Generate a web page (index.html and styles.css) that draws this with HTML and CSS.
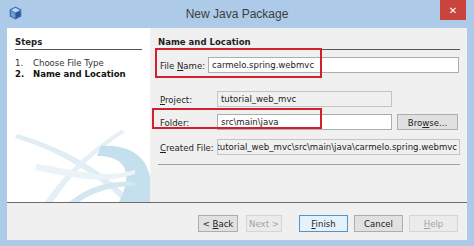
FILE: index.html
```html
<!DOCTYPE html>
<html lang="en">
<head>
  <meta charset="UTF-8">
  <title>New Java Package</title>
  <link rel="stylesheet" href="styles.css">
</head>
<body>
<div class="window">

  <!-- Title bar -->
  <div class="titlebar">
    <svg class="app-icon" width="13" height="14" viewBox="0 0 13 14">
      <path d="M6.5 0.5 L12.3 3.6 L12.3 10.4 L6.5 13.5 L0.7 10.4 L0.7 3.6 Z" fill="#3b6fb0"/>
      <path d="M6.5 1.8 L11 4.2 L6.5 6.6 L2 4.2 Z" fill="#bcd6f2"/>
      <path d="M2 5.2 L6 7.3 L6 12 L2 9.9 Z" fill="#6f9fd6"/>
      <path d="M7 7.3 L11 5.2 L11 9.9 L7 12 Z" fill="#2a5796"/>
    </svg>
    <div class="title">New Java Package</div>
    <div class="close">&#x2715;</div>
  </div>

  <div class="client">
    <div class="main">

      <!-- Steps -->
      <div class="steps">
        <div class="section-head">Steps</div>
        <ol class="step-list">
          <li><span class="num">1.</span>Choose File Type</li>
          <li class="current"><span class="num">2.</span>Name and Location</li>
        </ol>
        <svg class="swoosh" width="143" height="72" viewBox="0 0 143 72">
          <path d="M10 4 C50 16 90 34 126 72 L118 72 C84 40 48 20 8 8 Z" fill="#e1edf5"/>
          <path d="M118 2 C90 20 64 44 46 72 L38 72 C58 42 86 18 114 0 Z" fill="#e4eff6"/>
          <path d="M94 16 C124 14 150 28 143 72 L112 72 C130 36 112 26 90 26 Z" fill="#c4e0ed"/>
          <path d="M30 34 C60 38 96 50 128 40 L128 44 C96 56 60 46 28 40 Z" fill="#eaf3f8"/>
          <path d="M62 72 C82 56 102 50 128 52 L128 56 C106 56 86 62 72 72 Z" fill="#d4e7f1"/>
        </svg>
      </div>

      <!-- Name and Location -->
      <div class="panel">
        <div class="section-head">Name and Location</div>

        <div class="field name-row">
          <label class="lbl narrow">File <u>N</u>ame:</label>
          <div class="input wide">carmelo.spring.webmvc</div>
        </div>

        <div class="field project-row">
          <label class="lbl"><u>P</u>roject:</label>
          <div class="input ro short">tutorial_web_mvc</div>
        </div>

        <div class="field folder-row">
          <label class="lbl">Fo<u>l</u>der:</label>
          <div class="input short">src\main\java</div>
          <button class="btn browse">Bro<u>w</u>se...</button>
        </div>

        <div class="field created-row">
          <label class="lbl"><u>C</u>reated File:</label>
          <div class="input ro created"><span>tutorial_web_mvc\src\main\java\carmelo.spring.webmvc</span></div>
        </div>

        <div class="rule"></div>

        <div class="mark mark-name"></div>
        <div class="mark mark-folder"></div>
      </div>
    </div>

    <!-- Buttons -->
    <div class="footer">
      <button class="btn back">&lt; <u>B</u>ack</button>
      <button class="btn next disabled">Next &gt;</button>
      <button class="btn default"><u>F</u>inish</button>
      <button class="btn">Cancel</button>
      <button class="btn disabled"><u>H</u>elp</button>
    </div>
  </div>

</div>
</body>
</html>
```

FILE: styles.css
```css
/* Window frame */
body {
  margin: 0;
  font-family: 'DejaVu Sans Condensed', 'Liberation Sans', sans-serif;
  font-size: 9.5px;
  color: #1e1e1e;
}

.window {
  width: 474px;
  height: 246px;
  background: #adcbe9;
  display: flex;
  flex-direction: column;
}

/* Title bar */
.titlebar {
  height: 28px;
  display: flex;
  align-items: center;
  position: relative;
}

.app-icon {
  margin-left: 9px;
  margin-top: -2px;
}

.title {
  flex: 1;
  text-align: center;
  font-family: 'Liberation Sans', sans-serif;
  font-size: 12px;
  color: #3d3d3d;
  margin-top: -1px;
  padding-right: 22px;
}

.close {
  position: absolute;
  top: 0;
  right: 8px;
  width: 26px;
  height: 20px;
  background: #c9443c;
  color: #fff;
  font-family: 'DejaVu Sans', sans-serif;
  font-size: 10px;
  font-weight: bold;
  display: flex;
  align-items: center;
  justify-content: center;
}

/* Client area */
.client {
  margin: 0 7px;
  height: 212px;
  background: #f0f0f0;
  display: flex;
  flex-direction: column;
}

.main {
  height: 174px;
  display: flex;
  border-bottom: 1px solid #6b6b6b;
}

.section-head {
  font-weight: bold;
  padding-bottom: 1px;
  border-bottom: 1px solid #555;
  line-height: 13px;
}

/* Steps */
.steps {
  width: 127px;
  background: #fff;
  padding: 7px 8px 0 8px;
  position: relative;
  overflow: hidden;
}

.step-list {
  list-style: none;
  margin: 7px 0 0;
  padding: 0;
}

.step-list li {
  line-height: 11px;
  color: #333;
}

.step-list .num {
  display: inline-block;
  width: 18px;
}

.step-list .current {
  font-weight: bold;
  color: #111;
}

.swoosh {
  position: absolute;
  left: 0;
  bottom: 0;
}

/* Form panel */
.panel {
  flex: 1;
  padding: 7px 7px 0 8px;
  position: relative;
}

.field {
  display: flex;
  align-items: center;
  height: 16px;
}

.name-row { margin-top: 7px; }
.project-row { margin-top: 18px; }
.folder-row { margin-top: 7px; }
.created-row { margin-top: 9px; }

.lbl {
  width: 57px;
  padding-left: 2px;
  white-space: nowrap;
}

.lbl.narrow {
  width: 48px;
}

.input {
  box-sizing: border-box;
  height: 16px;
  line-height: 14px;
  border: 1px solid #abadb3;
  background: #fff;
  padding: 0 3px;
  white-space: nowrap;
  overflow: hidden;
  color: #222;
}

.input.wide {
  width: 251px;
}

.input.short {
  width: 175px;
}

.input.ro {
  background: #f0f0f0;
  border-color: #c4c4c4;
}

.input.created {
  width: 243px;
  display: flex;
  justify-content: flex-end;
  padding-right: 2px;
}

.rule {
  margin-top: 9px;
  border-top: 1px solid #a0a0a0;
}

/* Annotation boxes */
.mark {
  position: absolute;
  border: 2px solid #d2212b;
}

.mark-name {
  left: 5px;
  top: 20px;
  width: 163px;
  height: 26px;
}

.mark-folder {
  left: 2px;
  top: 80px;
  width: 166px;
  height: 17px;
}

/* Buttons */
.btn {
  font-family: inherit;
  font-size: inherit;
  box-sizing: border-box;
  height: 17px;
  padding: 0;
  border: 1px solid #adadad;
  background: #e1e1e1;
  color: #222;
}

.browse {
  width: 61px;
  height: 16px;
  margin-left: 5px;
}

.footer {
  flex: 1;
  display: flex;
  justify-content: flex-end;
  align-items: center;
  gap: 6px;
  padding: 4px 9px 0 0;
}

.footer .btn {
  width: 49px;
}

.footer .back {
  width: 40px;
  margin-right: 2px;
}

.footer .next {
  width: 36px;
  margin-right: 11px;
}

.footer .btn.disabled {
  color: #a3a3a3;
  background: #ebebeb;
  border-color: #d5d5d5;
}

.footer .btn.default {
  border-color: #4f93cf;
  background: #e5f1fb;
}
```
